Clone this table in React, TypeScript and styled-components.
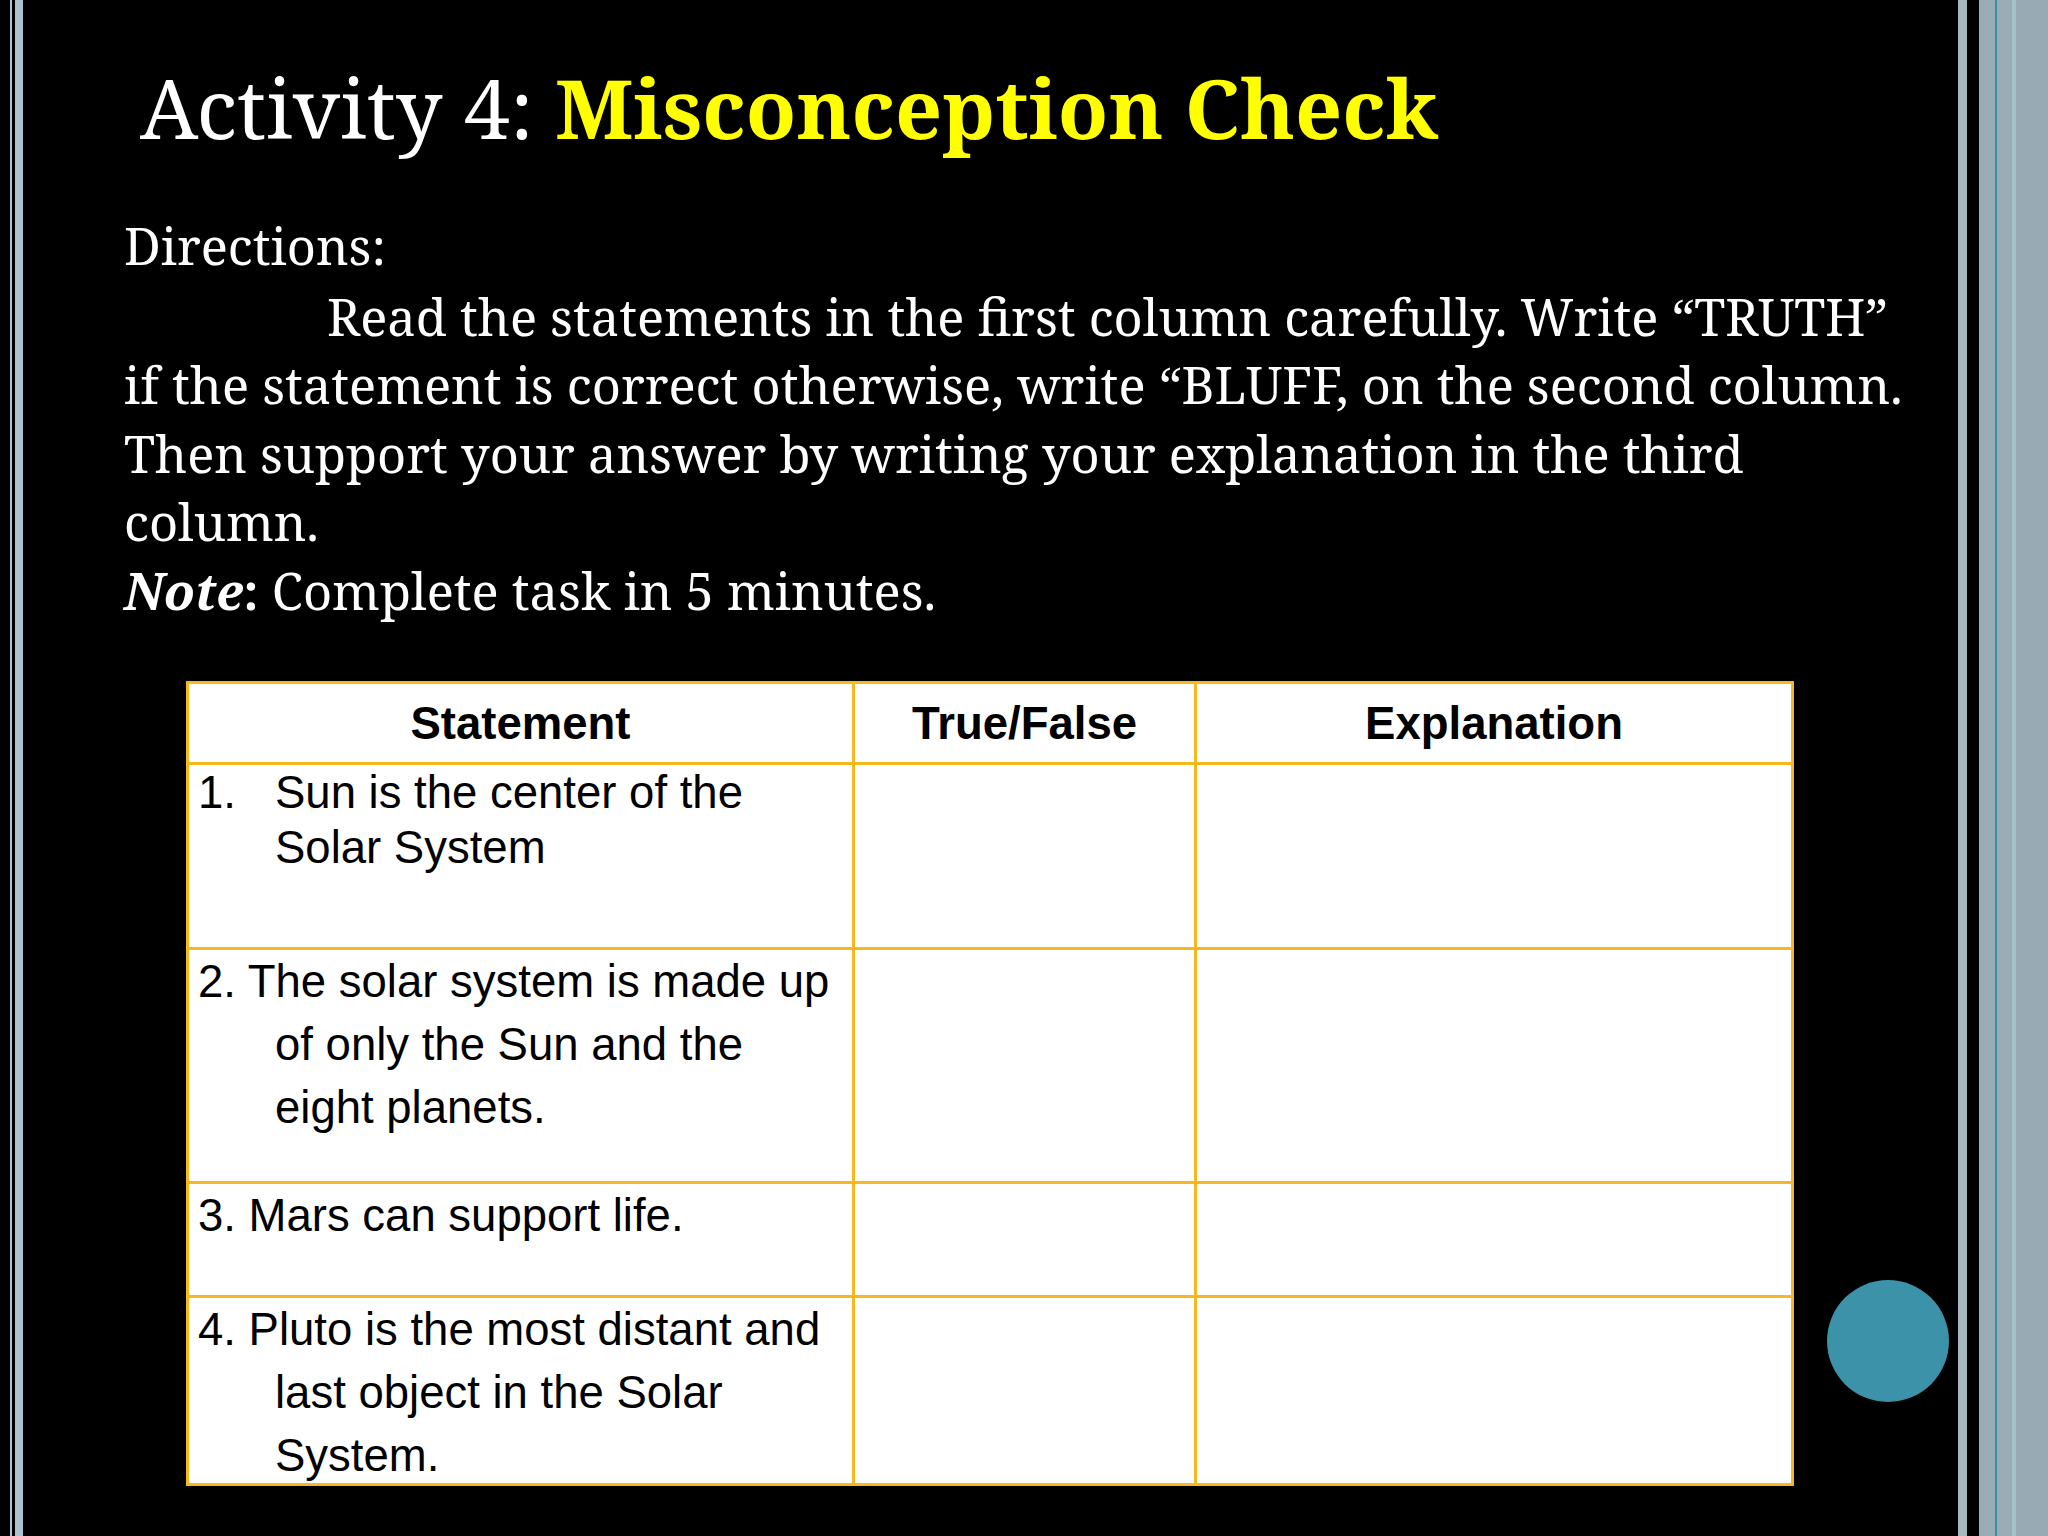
import React from "react";
import styled, { createGlobalStyle } from "styled-components";

const GlobalStyle = createGlobalStyle`
  html, body { margin: 0; padding: 0; background: #000; }
  body { width: 2048px; height: 1536px; overflow: hidden; }
`;

const Slide = styled.div`
  display: flex;
  width: 2048px;
  height: 1536px;
  background: #000;
  overflow: hidden;
`;

const LeftEdge = styled.div`
  flex: 0 0 24px;
  background: linear-gradient(
    to right,
    #000 0 10px,
    #b0c5cf 10px 12px,
    #000 12px 15px,
    #adc3ce 15px 23px,
    #000 23px
  );
`;

const RightEdge = styled.div`
  flex: 0 0 90px;
  background: linear-gradient(
    to right,
    #a5b8be 0 9px,
    #000 9px 21px,
    #9aacb6 21px 37px,
    #3b8d9c 37px 39px,
    #9aacb6 39px 54px,
    #a3c3c8 54px 58px,
    #98abb5 58px
  );
`;

const Content = styled.main`
  position: relative;
  flex: 1;
  padding: 52px 0 0 100px;
  box-sizing: border-box;
`;

const Title = styled.h1`
  margin: 0 0 0 16px;
  height: 110px;
  font-family: "Noto Serif", "DejaVu Serif Condensed", "Liberation Serif", serif;
  font-weight: normal;
  font-size: 82.5px;
  line-height: 110px;
  color: #ffffff;
  white-space: nowrap;
`;

const Highlight = styled.span`
  color: #ffff00;
  font-weight: bold;
`;

const Directions = styled.div`
  margin-top: 50px;
  font-family: "Noto Serif", "DejaVu Serif Condensed", "Liberation Serif", serif;
  font-size: 50.6px;
  line-height: 68.5px;
  color: #ffffff;
  white-space: nowrap;
`;

const Line = styled.div<{ $indent?: number; $gap?: number }>`
  padding-left: ${(p) => p.$indent ?? 0}px;
  margin-top: ${(p) => p.$gap ?? 0}px;
`;

const NoteLabel = styled.span`
  font-weight: bold;
  font-style: italic;
`;

const Colon = styled.span`
  font-weight: bold;
`;

const Table = styled.div`
  margin: 56px 0 0 62px;
  display: grid;
  grid-template-columns: 663px 339px 594px;
  grid-template-rows: 78px 182px 231px 111px 185px;
  gap: 3px;
  padding: 3px;
  width: max-content;
  background: #f6b81e;
  font-family: "Liberation Sans", Arial, sans-serif;
  font-size: 45.5px;
  color: #000;
`;

const HeadCell = styled.div`
  background: #fff;
  display: flex;
  align-items: center;
  justify-content: center;
  font-weight: bold;
  line-height: 55px;
`;

const BodyCell = styled.div<{ $lh: number }>`
  background: #fff;
  box-sizing: border-box;
  padding: 0 8px 0 86px;
  line-height: ${(p) => p.$lh}px;
  white-space: nowrap;
`;

const HangLine = styled.div<{ $first?: boolean }>`
  margin-left: ${(p) => (p.$first ? -77 : 0)}px;
`;

const Num = styled.span`
  display: inline-block;
  width: 77px;
`;

const Circle = styled.div`
  position: absolute;
  left: 1803px;
  top: 1280px;
  width: 122px;
  height: 122px;
  border-radius: 50%;
  background: #3b92a9;
`;

type Row = { lines: string[]; lh: number; num?: string };

const rows: Row[] = [
  { num: "1.", lines: ["Sun is the center of the", "Solar System"], lh: 55 },
  { lines: ["2. The solar system is made up", "of only the Sun and the", "eight planets."], lh: 63 },
  { lines: ["3. Mars can support life."], lh: 63 },
  { lines: ["4. Pluto is the most distant and", "last object in the Solar", "System."], lh: 63 },
];

export default function App() {
  return (
    <>
      <GlobalStyle />
      <Slide>
        <LeftEdge />
        <Content>
          <Title>
            Activity 4: <Highlight>Misconception Check</Highlight>
          </Title>
          <Directions>
            <Line>Directions:</Line>
            <Line $indent={203} $gap={2}>
              Read the statements in the first column carefully. Write “TRUTH”
            </Line>
            <Line>if the statement is correct otherwise, write “BLUFF, on the second column.</Line>
            <Line>Then support your answer by writing your explanation in the third</Line>
            <Line>column.</Line>
            <Line>
              <NoteLabel>Note</NoteLabel>
              <Colon>:</Colon> Complete task in 5 minutes.
            </Line>
          </Directions>
          <Table>
            <HeadCell>Statement</HeadCell>
            <HeadCell>True/False</HeadCell>
            <HeadCell>Explanation</HeadCell>
            {rows.map((r, i) => (
              <React.Fragment key={i}>
                <BodyCell $lh={r.lh}>
                  {r.lines.map((l, j) => (
                    <HangLine key={j} $first={j === 0}>
                      {j === 0 && r.num ? <Num>{r.num}</Num> : null}
                      {l}
                    </HangLine>
                  ))}
                </BodyCell>
                <BodyCell $lh={r.lh} />
                <BodyCell $lh={r.lh} />
              </React.Fragment>
            ))}
          </Table>
          <Circle />
        </Content>
        <RightEdge />
      </Slide>
    </>
  );
}
